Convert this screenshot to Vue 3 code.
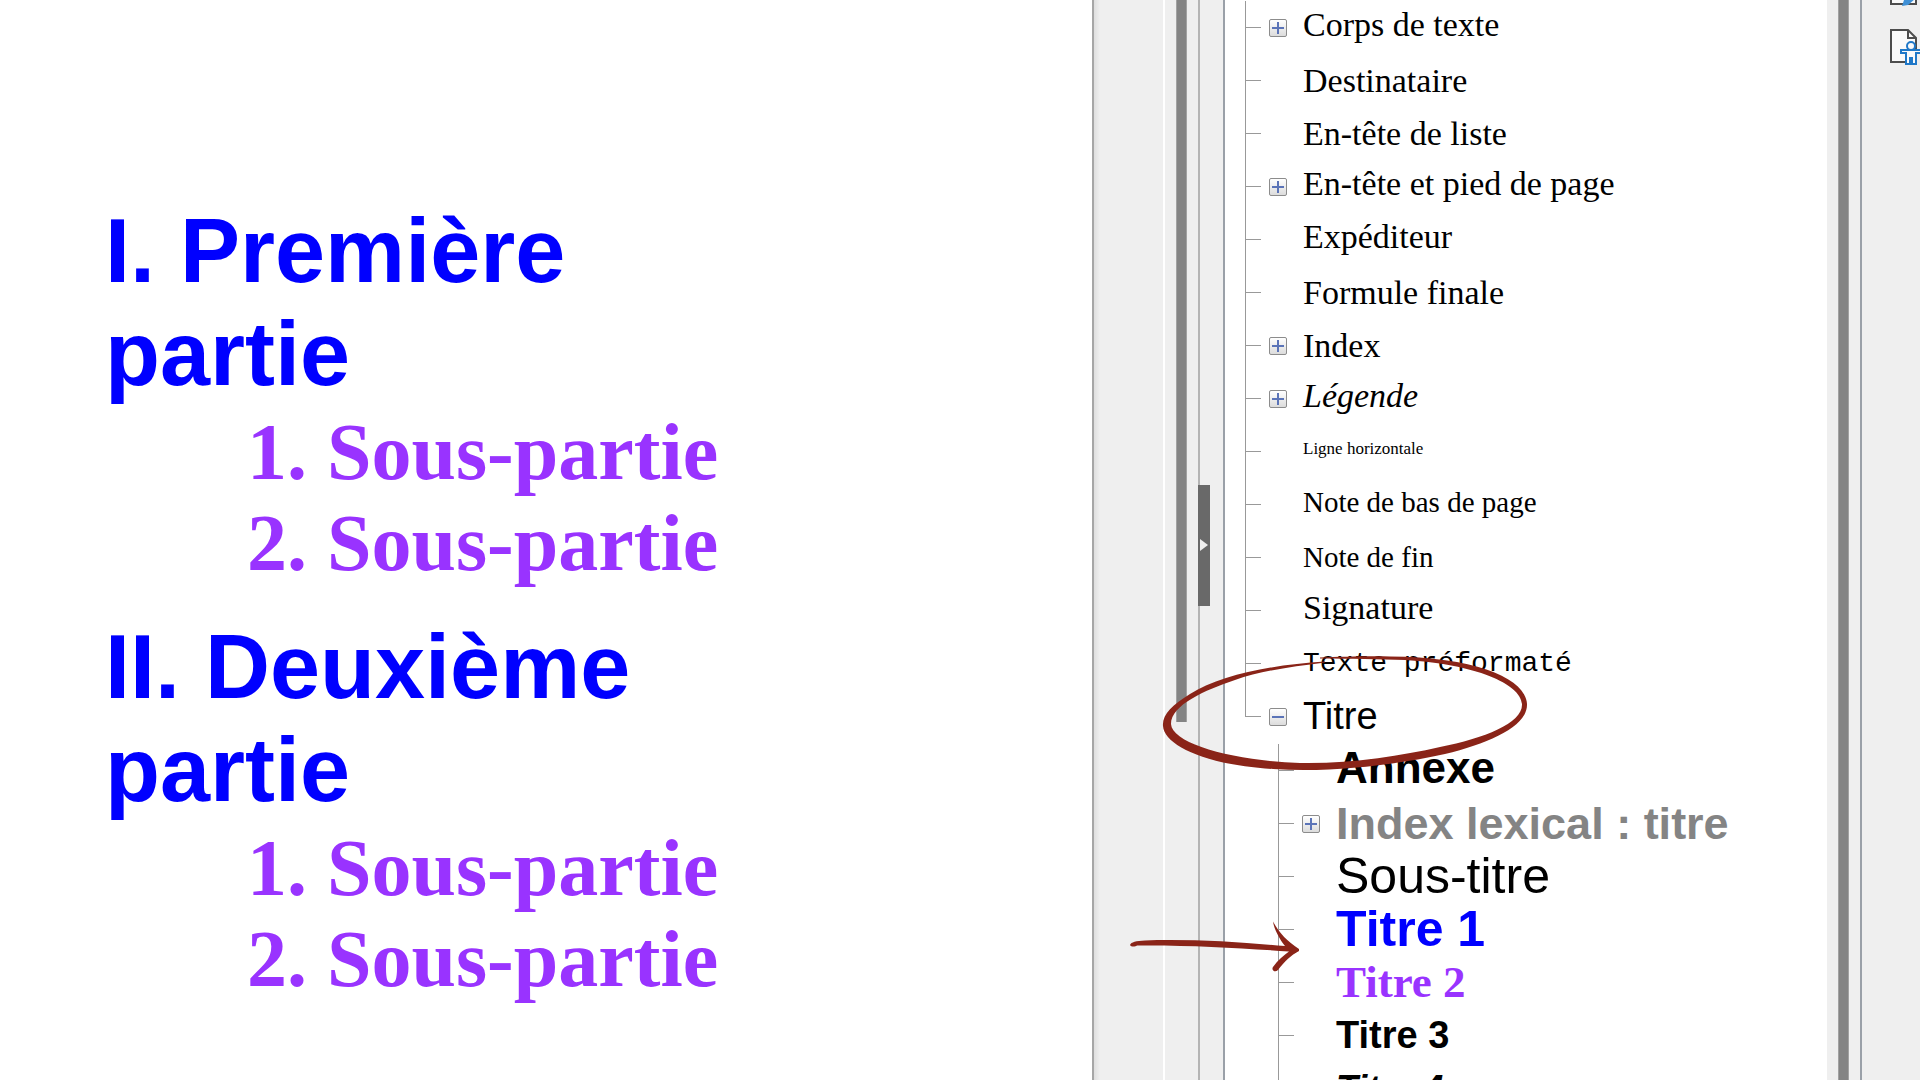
<script setup>
const serif = 'serif'

const roots = [
  { text: 'Corps de texte', kind: serif, box: '+', high: true },
  { text: 'Destinataire', kind: serif },
  { text: 'En-tête de liste', kind: serif },
  { text: 'En-tête et pied de page', kind: serif, box: '+', high: true },
  { text: 'Expéditeur', kind: serif, high: true },
  { text: 'Formule finale', kind: serif },
  { text: 'Index', kind: serif, box: '+' },
  { text: 'Légende', kind: 'caption', box: '+', high: true },
  { text: 'Ligne horizontale', kind: 'rule', high: true },
  { text: 'Note de bas de page', kind: 'note', high: true },
  { text: 'Note de fin', kind: 'note' },
  { text: 'Signature', kind: serif, high: true },
  { text: 'Texte préformaté', kind: 'mono' },
  { text: 'Titre', kind: 'title', box: '-' },
]

const children = [
  { text: 'Annexe', kind: 'appendix', high: true },
  { text: 'Index lexical : titre', kind: 'index', box: '+' },
  { text: 'Sous-titre', kind: 'subtitle' },
  { text: 'Titre 1', kind: 'h-one' },
  { text: 'Titre 2', kind: 'h-two' },
  { text: 'Titre 3', kind: 'h-three' },
  { text: 'Titre 4', kind: 'h-four' },
]

const parts = ['I. Première partie', 'II. Deuxième partie']
const subparts = ['1. Sous-partie', '2. Sous-partie']
</script>

<template>
  <div class="window">
    <main class="page">
      <section v-for="part in parts" :key="part" class="part">
        <h1>{{ part }}</h1>
        <h2 v-for="sub in subparts" :key="sub">{{ sub }}</h2>
      </section>
    </main>

    <div class="gutter">
      <div class="canvas-edge"></div>
      <div class="scroll"><div class="thumb short"></div></div>
      <div class="splitter">
        <button class="collapse" aria-label="Masquer le volet">
          <svg viewBox="0 0 8 12" width="8" height="12"><path d="M0 0 8 6 0 12z" fill="#f0f0f0" /></svg>
        </button>
      </div>
    </div>

    <aside class="styles">
      <ul class="tree root">
        <li v-for="item in roots" :key="item.text" class="row">
          <span class="tick"></span>
          <span class="slot">
            <button v-if="item.box" class="box" :class="{ open: item.box === '-' }" :aria-label="item.text"></button>
          </span>
          <span class="label" :class="[item.kind, { high: item.high }]">{{ item.text }}</span>
        </li>
      </ul>
      <ul class="tree nested">
        <li v-for="item in children" :key="item.text" class="row">
          <span class="tick"></span>
          <span class="slot">
            <button v-if="item.box" class="box" :aria-label="item.text"></button>
          </span>
          <span class="label" :class="[item.kind, { high: item.high }]">{{ item.text }}</span>
        </li>
      </ul>

      <svg class="ink" width="420" height="360" viewBox="1120 640 420 360" aria-hidden="true">
        <path
          fill="#8a2418"
          d="M1325 661.500C1270 665 1220 675 1190 694C1172 705 1162 715 1163 726C1164 745 1205 765 1273 769C1330 773 1395 765 1445 754C1490 743 1528 726 1527 704C1526 680 1480 657 1390 656.500C1365 656 1340 657 1320 657.500L1320 658.500C1350 659 1380 659 1405 660C1475 664 1521 684 1522 704C1523 723 1485 738 1440 747C1400 756 1350 764 1300 763C1235 761 1172 744 1171 724C1171 705 1205 690 1235 680C1260 671 1290 667 1325 662.500Z"
        />
        <path
          fill="#8a2418"
          d="M1130 945C1131 942 1136 941 1145 940.500C1190 939 1240 942 1285 946C1280 940 1274 929 1273 921.500C1280 934 1287 941 1299 949L1299 951C1291 955 1284 962 1278 970C1275 973 1271 970 1273 967C1278 960 1284 955 1289 951.500C1240 948 1190 945 1137 945.500C1135 947 1131 947 1130 945Z"
        />
      </svg>
    </aside>

    <div class="right">
      <div class="scroll"><div class="thumb"></div></div>
      <nav class="tabs">
        <button class="tab" aria-label="Modifier">
          <svg width="30" height="40" viewBox="0 0 30 40">
            <path d="M1 0V36H26V0" fill="#fafafa" stroke="#4d4d4d" stroke-width="2" />
            <path d="M12 38 14 32 20 27 25 31 18 37z" fill="#3f90d6" />
          </svg>
        </button>
        <button class="tab" aria-label="Accessibilité">
          <svg width="30" height="40" viewBox="0 0 30 40">
            <path d="M1 1H18L26 9V33H1Z" fill="#fafafa" stroke="#4d4d4d" stroke-width="2" />
            <path d="M18 1V9H26" fill="none" stroke="#4d4d4d" stroke-width="2" />
            <circle cx="21" cy="17" r="4" fill="#fafafa" stroke="#1f78c8" stroke-width="2" />
            <path d="M11 21H31V24H26V35H22V29H20V35H16V24H11Z" fill="#fafafa" stroke="#1f78c8" stroke-width="2" />
          </svg>
        </button>
      </nav>
    </div>
  </div>
</template>

<style>
body {
  margin: 0;
}
</style>

<style scoped>
.window {
  display: grid;
  grid-template-columns: minmax(0, 1092fr) 131px minmax(0, 604fr) 93px;
  grid-template-rows: 100vh;
  overflow: hidden;
  background: #fff;
  color: #000;
}
h1,
h2,
ul {
  margin: 0;
  padding: 0;
}
button {
  padding: 0;
  border: 0;
  background: none;
}
.page {
  padding: 200px 0 0 105px;
}
.part {
  margin-bottom: 27px;
}
h1 {
  max-width: 640px;
  margin-bottom: 1px;
  font: bold 90px/103px "Liberation Sans", Arial, sans-serif;
  color: #00f;
}
h2 {
  padding-left: 142px;
  font: bold 80px/91px "Liberation Serif", "Times New Roman", serif;
  color: #93f;
}
.gutter {
  display: flex;
  background: #efefef;
}
.canvas-edge {
  width: 69px;
  border-left: 2px solid #a6a6a6;
  border-right: 2px solid #fff;
  background: linear-gradient(90deg, #dedede, #efefef 6px);
}
.scroll {
  flex: 0 0 33px;
  display: flex;
  justify-content: center;
}
.thumb {
  width: 9px;
  border: solid #a2a2a2;
  border-width: 0 1px;
  background: #848484;
}
.thumb.short {
  height: 722px;
}
.splitter {
  display: flex;
  align-items: center;
  flex: 1;
  border-left: 2px solid #b4b4b4;
}
.collapse {
  display: flex;
  align-items: center;
  width: 12px;
  height: 121px;
  margin: 10px 0 0 -2px;
  padding-left: 2px;
  background: #696969;
}
.styles {
  position: relative;
  border-left: 2px solid #9aa0a8;
  background: #fff;
}
.tree {
  list-style: none;
  padding-top: 1px;
}
.root {
  padding-left: 20px;
}
.nested {
  padding-left: 53px;
}
.row {
  display: flex;
  align-items: center;
  height: 53px;
  background: linear-gradient(#999, #999) 0 0 / 1px 100% no-repeat;
}
.root .row:last-child {
  background-size: 1px 27px;
}
.tick {
  width: 16px;
  height: 1px;
  background: #999;
}
.slot {
  display: flex;
  justify-content: center;
  width: 34px;
  margin-right: 8px;
}
.box {
  width: 18px;
  height: 18px;
  border: 1px solid #8c8c8c;
  border-radius: 2px;
  background:
    linear-gradient(#5b74b8, #5b74b8) center / 12px 2px no-repeat,
    linear-gradient(#5b74b8, #5b74b8) center / 2px 12px no-repeat,
    linear-gradient(#fff, #dcdcdc);
}
.box.open {
  background:
    linear-gradient(#5b74b8, #5b74b8) center / 12px 2px no-repeat,
    linear-gradient(#fff, #dcdcdc);
}
.label {
  align-self: flex-start;
  line-height: 53px;
  white-space: nowrap;
}
.label.high {
  line-height: 48px;
}
.serif,
.caption,
.rule,
.note,
.h-two {
  font-family: "Liberation Serif", "Times New Roman", serif;
  font-size: 34px;
}
.caption {
  font-style: italic;
}
.rule {
  font-size: 17px;
}
.note {
  font-size: 29px;
}
.mono {
  font-family: "Liberation Mono", "Courier New", monospace;
  font-size: 28px;
}
.title,
.appendix,
.index,
.subtitle,
.h-one,
.h-three,
.h-four {
  font-family: "Liberation Sans", Arial, sans-serif;
  font-size: 38px;
}
.appendix,
.index,
.h-one,
.h-two,
.h-three,
.h-four {
  font-weight: bold;
}
.appendix,
.index,
.h-two {
  font-size: 45px;
}
.appendix {
  font-size: 44px;
}
.index {
  color: #848484;
}
.subtitle,
.h-one {
  font-size: 50px;
}
.h-one {
  color: #00f;
}
.h-two {
  color: #93f;
}
.h-four {
  font-size: 36px;
  font-style: italic;
}
.ink {
  position: absolute;
  top: 640px;
  left: -105px;
  pointer-events: none;
}
.right {
  display: flex;
  background: #efefef;
}
.tabs {
  flex: 1;
  display: flex;
  flex-direction: column;
  align-items: flex-start;
  gap: 21px;
  border-left: 2px solid #9aa0a8;
  padding-left: 28px;
  overflow: hidden;
}
.tab {
  flex: 0 0 40px;
}
.tab svg {
  display: block;
}
.tab:first-child {
  margin-top: -32px;
}
</style>
